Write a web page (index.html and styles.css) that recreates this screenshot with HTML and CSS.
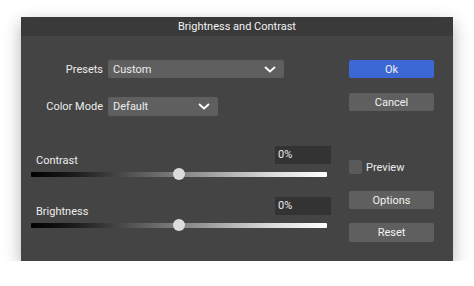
FILE: index.html
```
<!DOCTYPE html>
<html lang="en">
<head>
  <meta charset="UTF-8">
  <title>Brightness and Contrast</title>
  <link rel="stylesheet" href="styles.css">
</head>
<body>
  <div class="dialog">
    <div class="titlebar">Brightness and Contrast</div>
    <div class="content">
      <div class="left-col">
        <div class="field-row">
          <label class="field-label">Presets</label>
          <div class="dropdown dropdown-wide">
            <span>Custom</span>
            <svg class="chevron" width="12" height="7" viewBox="0 0 12 7"><path d="M1 1 L6 5.5 L11 1" fill="none" stroke="#fff" stroke-width="1.8"/></svg>
          </div>
        </div>
        <div class="field-row second">
          <label class="field-label">Color Mode</label>
          <div class="dropdown dropdown-narrow">
            <span>Default</span>
            <svg class="chevron" width="12" height="7" viewBox="0 0 12 7"><path d="M1 1 L6 5.5 L11 1" fill="none" stroke="#fff" stroke-width="1.8"/></svg>
          </div>
        </div>

        <div class="slider-group first">
          <div class="slider-head">
            <span class="slider-label">Contrast</span>
            <div class="value-box">0%</div>
          </div>
          <div class="track">
            <div class="thumb" style="left: 50%;"></div>
          </div>
        </div>

        <div class="slider-group">
          <div class="slider-head">
            <span class="slider-label">Brightness</span>
            <div class="value-box">0%</div>
          </div>
          <div class="track">
            <div class="thumb" style="left: 50%;"></div>
          </div>
        </div>
      </div>

      <div class="right-col">
        <button class="btn btn-primary">Ok</button>
        <button class="btn btn-cancel">Cancel</button>
        <div class="check-row">
          <span class="checkbox"></span>
          <span>Preview</span>
        </div>
        <button class="btn btn-options">Options</button>
        <button class="btn btn-reset">Reset</button>
      </div>
    </div>
  </div>
</body>
</html>
```

FILE: styles.css
```
body {
  margin: 0;
  padding: 17px 0 0 21px;
  background: #fff;
  font-family: 'Roboto', 'Liberation Sans', sans-serif;
  font-size: 11px;
  color: #ececec;
}

.dialog {
  width: 432px;
  height: 244px;
  background-color: #444444;
  box-shadow: 0 6px 16px rgba(0, 0, 0, 0.3);
}

.titlebar {
  height: 19px;
  line-height: 19px;
  background-color: #3a3a3a;
  text-align: center;
  font-size: 11px;
  color: #f2f2f2;
}

.content {
  display: flex;
  padding: 24px 0 0 10px;
}

.left-col {
  width: 300px;
}

.right-col {
  width: 85px;
  margin-left: 18px;
  display: flex;
  flex-direction: column;
}

.field-row {
  display: flex;
  align-items: center;
}

.field-row.second {
  margin-top: 19px;
}

.field-label {
  width: 72px;
  padding-right: 5px;
  text-align: right;
}

.dropdown {
  display: flex;
  align-items: center;
  justify-content: space-between;
  background-color: #5f5f5f;
  border-radius: 2px;
  padding: 0 8px 0 5px;
  box-sizing: border-box;
}

.dropdown-wide {
  width: 176px;
  height: 18px;
}

.dropdown-narrow {
  width: 110px;
  height: 19px;
}

.chevron {
  display: block;
}

.slider-group {
  margin-top: 20px;
}

.slider-group.first {
  margin-top: 30px;
}

.slider-head {
  display: flex;
  align-items: flex-end;
  justify-content: space-between;
  height: 18px;
}

.slider-label {
  padding-left: 5px;
  line-height: 14px;
  margin-bottom: -4px;
}

.value-box {
  width: 56px;
  height: 18px;
  line-height: 18px;
  background-color: #333333;
  padding-left: 3px;
  box-sizing: border-box;
}

.track {
  position: relative;
  width: 296px;
  height: 5px;
  margin-top: 8px;
  background-image: linear-gradient(to right, #000 0%, #1c1c1c 15%, #808080 50%, #d8d8d8 80%, #fff 100%);
  border-radius: 1px;
}

.thumb {
  position: absolute;
  top: -4px;
  width: 12px;
  height: 12px;
  margin-left: -6px;
  border-radius: 50%;
  background-color: #dcdcdc;
}

.btn {
  width: 85px;
  height: 18px;
  border: none;
  border-radius: 2px;
  background-color: #5f5f5f;
  color: #f2f2f2;
  font-family: inherit;
  font-size: 11px;
  padding: 0;
}

.btn-primary {
  background-color: #3c68d6;
}

.btn-cancel {
  margin-top: 15px;
}

.check-row {
  display: flex;
  align-items: center;
  margin-top: 49px;
  height: 14px;
}

.checkbox {
  width: 13px;
  height: 14px;
  background-color: #5a5a5a;
  border-radius: 2px;
  margin-right: 4px;
}

.btn-options {
  margin-top: 17px;
}

.btn-reset {
  margin-top: 14px;
  height: 19px;
}
```
